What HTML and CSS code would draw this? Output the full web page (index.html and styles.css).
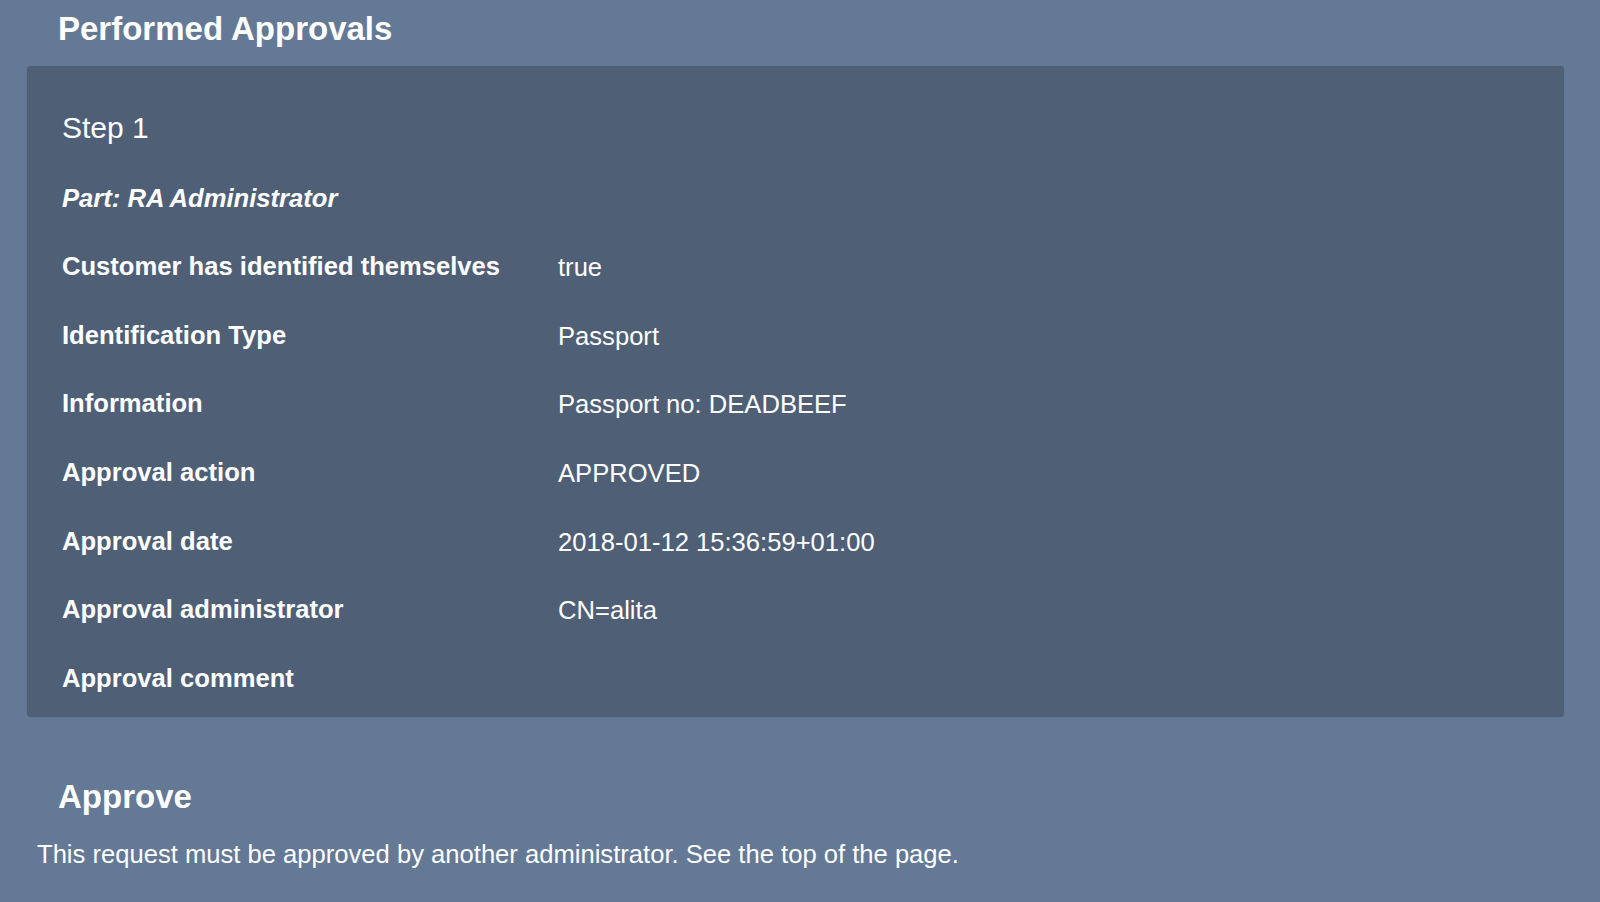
FILE: index.html
```html
<!DOCTYPE html>
<html lang="en">
<head>
  <meta charset="UTF-8">
  <meta name="viewport" content="width=device-width, initial-scale=1.0">
  <title>Performed Approvals</title>
  <link rel="stylesheet" href="styles.css">
</head>
<body>

<div class="page">
  <h2 class="section-title">Performed Approvals</h2>

  <div class="approval-card">
    <h3 class="step-title">Step 1</h3>
    <div class="part-title">Part: RA Administrator</div>

    <div class="approval-rows">
      <div class="approval-row">
        <div class="row-label">Customer has identified themselves</div>
        <div class="row-value">true</div>
      </div>
      <div class="approval-row">
        <div class="row-label">Identification Type</div>
        <div class="row-value">Passport</div>
      </div>
      <div class="approval-row">
        <div class="row-label">Information</div>
        <div class="row-value">Passport no: DEADBEEF</div>
      </div>
      <div class="approval-row">
        <div class="row-label">Approval action</div>
        <div class="row-value">APPROVED</div>
      </div>
      <div class="approval-row">
        <div class="row-label">Approval date</div>
        <div class="row-value">2018-01-12 15:36:59+01:00</div>
      </div>
      <div class="approval-row">
        <div class="row-label">Approval administrator</div>
        <div class="row-value">CN=alita</div>
      </div>
      <div class="approval-row">
        <div class="row-label">Approval comment</div>
        <div class="row-value"></div>
      </div>
    </div>
  </div>

  <h2 class="section-title approve-title">Approve</h2>
  <p class="approve-note">This request must be approved by another administrator. See the top of the page.</p>
</div>

</body>
</html>
```

FILE: styles.css
```css
body {
  margin: 0;
  padding: 0;
  font-family: 'Liberation Sans', Helvetica, Arial, sans-serif;
  background-color: #647996;
  color: #fff;
  height: 100vh;
  overflow: hidden;
}

.page {
  padding: 0 36px 0 27px;
}

.section-title {
  margin: 0;
  padding: 9px 0 0 31px;
  font-size: 33px;
  line-height: 40px;
  font-weight: bold;
}

.approval-card {
  margin-top: 17px;
  background-color: #4f6076;
  border-radius: 4px;
  box-shadow: 0 0 1px rgba(0, 0, 0, 0.25);
  padding: 44px 35px 4.5px 35px;
}

.step-title {
  margin: 0;
  font-size: 30px;
  line-height: 36px;
  font-weight: normal;
}

.part-title {
  margin-top: 37px;
  font-size: 25.6px;
  line-height: 30px;
  font-weight: bold;
  font-style: italic;
}

.approval-rows {
  margin-top: 18.8px;
}

.approval-row {
  display: grid;
  grid-template-columns: 496px 1fr;
  padding: 19.33px 0;
  font-size: 25.6px;
  line-height: 30px;
}

.row-label {
  font-weight: bold;
}

.row-value {
  padding-top: 3px;
  line-height: 27px;
}

.approve-title {
  margin-top: 60.5px;
  padding-top: 0;
}

.approve-note {
  margin: 21.5px 0 0 10px;
  font-size: 25.6px;
  line-height: 30px;
}
```
